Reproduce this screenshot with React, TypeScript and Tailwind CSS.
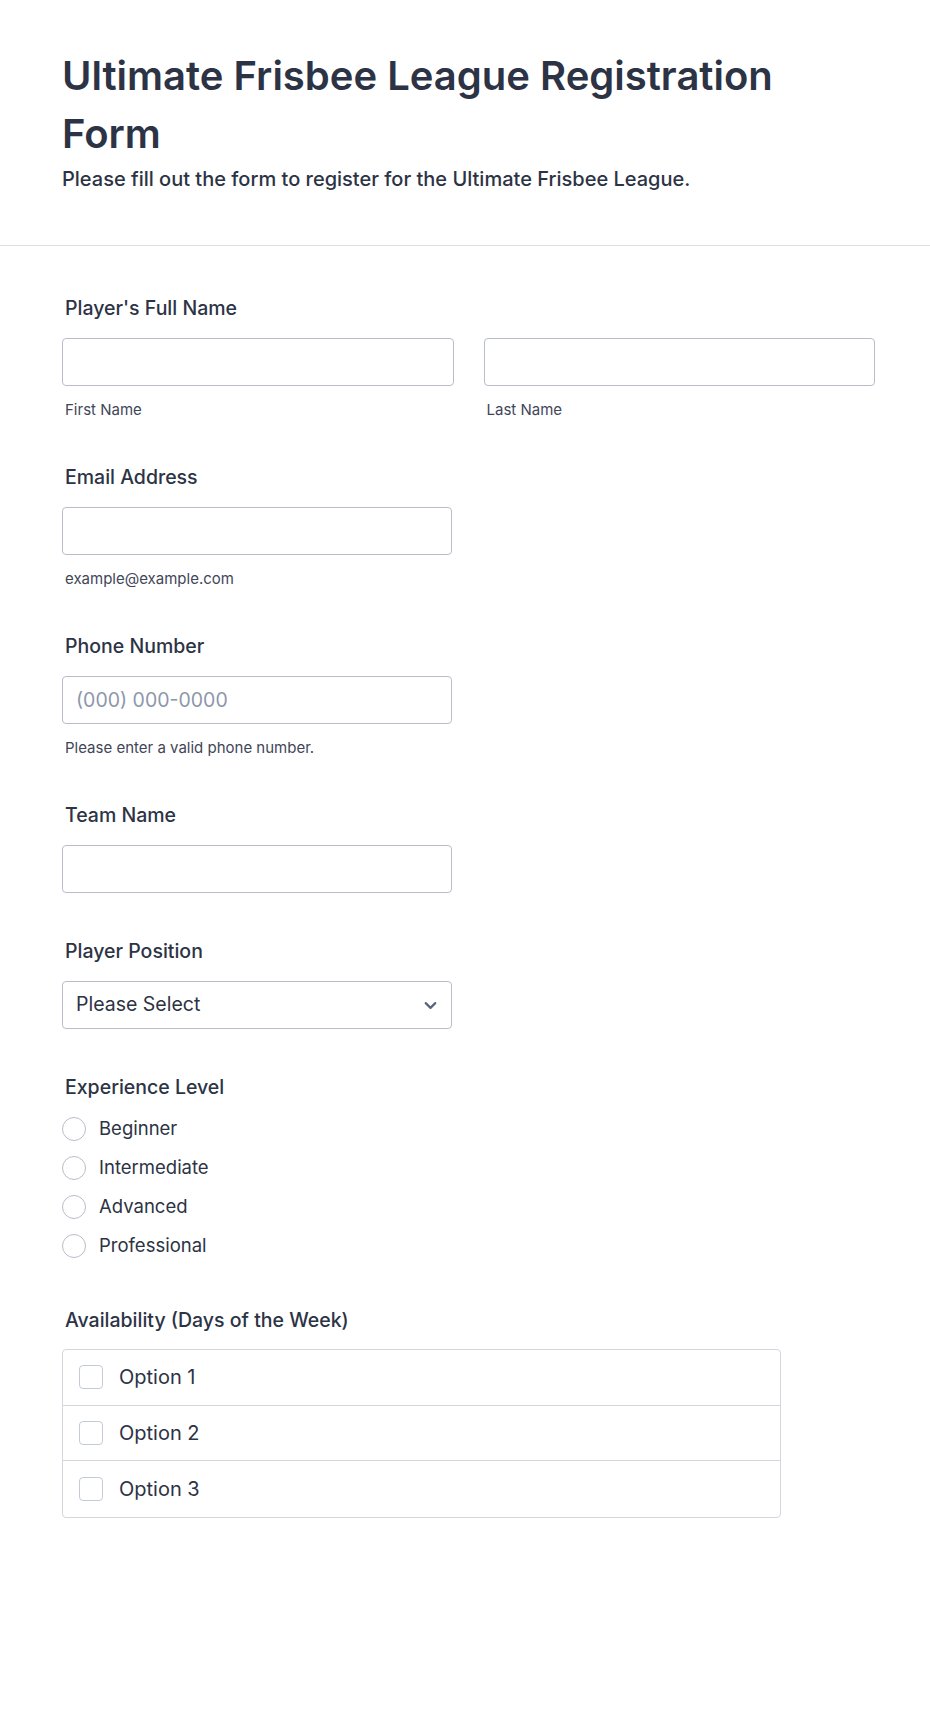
import { ChevronDown } from 'lucide-react';

const font = { fontFamily: 'Inter, "Noto Sans", sans-serif' };

const Label = ({ children, className = 'mb-[19px]' }: { children: React.ReactNode; className?: string }) => (
  <div className={`pl-[3px] text-[19.5px] leading-[22px] font-medium text-[#2c3345] ${className}`}>{children}</div>
);

const Sub = ({ children }: { children: React.ReactNode }) => (
  <div className="pl-[3px] mt-[15px] text-[15px] leading-[18px] text-[#3f4658]">{children}</div>
);

const TextBox = ({ placeholder }: { placeholder?: string }) => (
  <input
    type="text"
    placeholder={placeholder}
    className="block w-full h-[48px] rounded-[4px] border border-[#b8bdc9] bg-white px-[13px] text-[19.5px] text-[#2c3345] placeholder:text-[#8d97ab] outline-none"
  />
);

const levels = ['Beginner', 'Intermediate', 'Advanced', 'Professional'];
const days = ['Option 1', 'Option 2', 'Option 3'];

export default function App() {
  return (
    <div className="min-h-screen bg-white" style={font}>
      {/* header */}
      <div className="px-[62px] pt-[47px] pb-[54px] border-b border-[#dcdfe6]">
        <h1 className="max-w-[760px] text-[40px] leading-[58px] font-semibold text-[#2c3345]">
          Ultimate Frisbee League Registration Form
        </h1>
        <p className="mt-[4px] text-[20px] leading-[24px] font-medium text-[#2c3345]">
          Please fill out the form to register for the Ultimate Frisbee League.
        </p>
      </div>

      <form className="px-[62px] pt-[51px] pb-[100px] flex flex-col gap-[47px]">
        <div>
          <Label>Player's Full Name</Label>
          <div className="grid grid-cols-2 gap-[30px] w-[813px]">
            <div>
              <TextBox />
              <Sub>First Name</Sub>
            </div>
            <div>
              <TextBox />
              <Sub>Last Name</Sub>
            </div>
          </div>
        </div>

        <div className="w-[390px]">
          <Label>Email Address</Label>
          <TextBox />
          <Sub>example@example.com</Sub>
        </div>

        <div className="w-[390px]">
          <Label>Phone Number</Label>
          <TextBox placeholder="(000) 000-0000" />
          <Sub>Please enter a valid phone number.</Sub>
        </div>

        <div className="w-[390px]">
          <Label>Team Name</Label>
          <TextBox />
        </div>

        <div className="w-[390px]">
          <Label>Player Position</Label>
          <div className="flex items-center justify-between h-[48px] rounded-[4px] border border-[#b8bdc9] pl-[13px] pr-[11px] text-[19.5px] text-[#2c3345]">
            <span>Please Select</span>
            <ChevronDown size={19} strokeWidth={2.75} className="text-[#57647e]" />
          </div>
        </div>

        <div>
          <Label>Experience Level</Label>
          <div className="flex flex-col gap-[15px] mb-[4px]">
            {levels.map((l) => (
              <label key={l} className="flex items-center gap-[13px] h-[24px]">
                <span className="w-[24px] h-[24px] rounded-full border border-[#b8bdc9] bg-white shrink-0" />
                <span className="text-[18.5px] text-[#2c3345]">{l}</span>
              </label>
            ))}
          </div>
        </div>

        <div>
          <Label className="mb-[18px]">Availability (Days of the Week)</Label>
          <div className="w-[719px] rounded-[4px] border border-[#d3d6dd] divide-y divide-[#d3d6dd]">
            {days.map((d) => (
              <label key={d} className="flex items-center gap-[16px] h-[55.5px] px-[16px]">
                <span className="w-[24px] h-[24px] rounded-[4px] border border-[#c3cad8] bg-white shrink-0" />
                <span className="text-[20px] text-[#2c3345]">{d}</span>
              </label>
            ))}
          </div>
        </div>
      </form>
    </div>
  );
}
